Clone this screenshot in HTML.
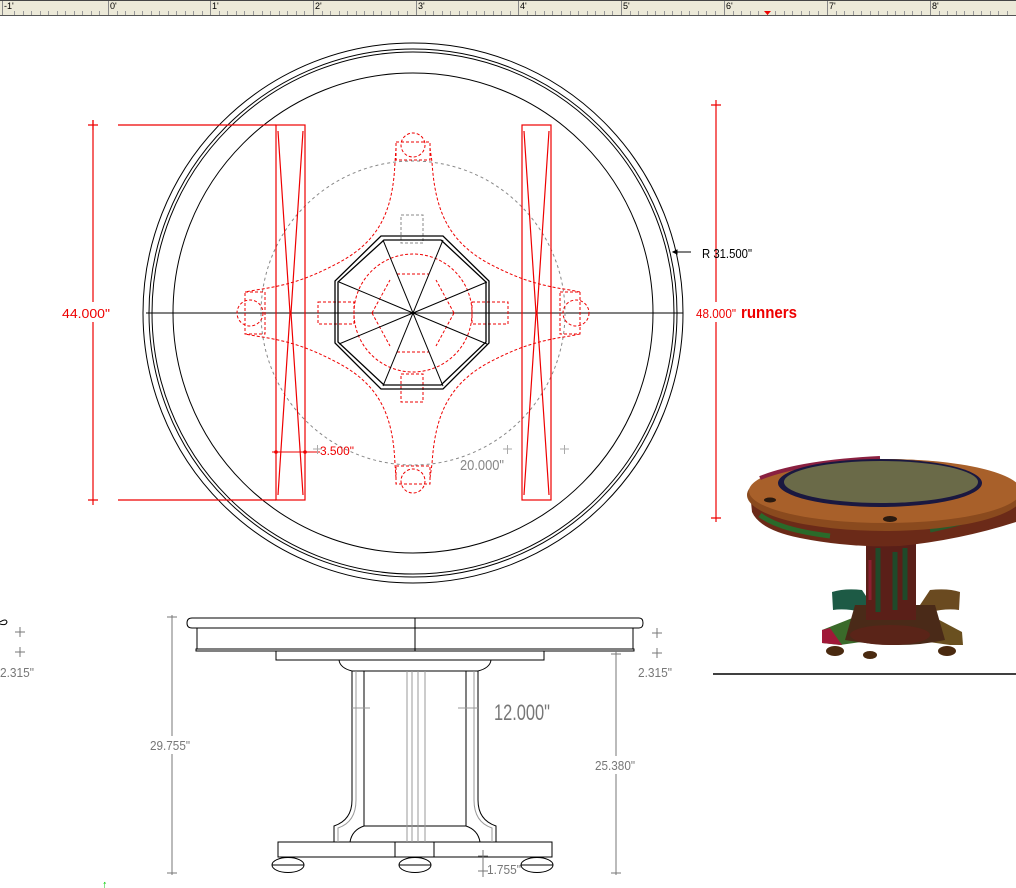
<!DOCTYPE html>
<html><head><meta charset="utf-8"><style>
html,body{margin:0;padding:0;background:#fff;width:1016px;height:888px;overflow:hidden}
svg{display:block}
text{font-family:"Liberation Sans",sans-serif}
</style></head><body>
<svg width="1016" height="888" viewBox="0 0 1016 888" xmlns="http://www.w3.org/2000/svg">
<!-- ruler -->
<rect x="0" y="0" width="1016" height="16" fill="#ece9d8"/>
<line x1="0" y1="0.5" x2="1016" y2="0.5" stroke="#444"/>
<line x1="0" y1="15.5" x2="1016" y2="15.5" stroke="#555"/>
<g stroke="#888" stroke-width="1">
<path d="M2.5 1V15 M108.5 1V15 M210.5 1V15 M313.5 1V15 M416.5 1V15 M518.5 1V15 M621.5 1V15 M724.5 1V15 M827.5 1V15 M930.5 1V15"/>
</g>
<g stroke="#999" stroke-width="1">
<path d="M14.5 11V15M23.5 11V15M31.5 11V15M40.5 11V15M48.5 11V15M57.5 11V15M65.5 11V15M74.5 11V15M82.5 11V15M91.5 11V15M99.5 11V15
M117.5 11V15M125.5 11V15M134.5 11V15M142.5 11V15M151.5 11V15M159.5 11V15M168.5 11V15M176.5 11V15M185.5 11V15M193.5 11V15M202.5 11V15
M219.5 11V15M227.5 11V15M236.5 11V15M244.5 11V15M253.5 11V15M262.5 11V15M270.5 11V15M279.5 11V15M287.5 11V15M296.5 11V15M304.5 11V15
M322.5 11V15M330.5 11V15M339.5 11V15M347.5 11V15M356.5 11V15M364.5 11V15M373.5 11V15M381.5 11V15M390.5 11V15M398.5 11V15M407.5 11V15
M425.5 11V15M433.5 11V15M442.5 11V15M450.5 11V15M459.5 11V15M467.5 11V15M476.5 11V15M484.5 11V15M493.5 11V15M501.5 11V15M510.5 11V15
M527.5 11V15M535.5 11V15M544.5 11V15M552.5 11V15M561.5 11V15M570.5 11V15M578.5 11V15M587.5 11V15M595.5 11V15M604.5 11V15M612.5 11V15
M630.5 11V15M638.5 11V15M647.5 11V15M655.5 11V15M664.5 11V15M672.5 11V15M681.5 11V15M689.5 11V15M698.5 11V15M706.5 11V15M715.5 11V15
M733.5 11V15M741.5 11V15M750.5 11V15M758.5 11V15M767.5 11V15M775.5 11V15M784.5 11V15M792.5 11V15M801.5 11V15M809.5 11V15M818.5 11V15
M836.5 11V15M844.5 11V15M853.5 11V15M861.5 11V15M870.5 11V15M878.5 11V15M887.5 11V15M895.5 11V15M904.5 11V15M912.5 11V15M921.5 11V15
M939.5 11V15M947.5 11V15M956.5 11V15M964.5 11V15M973.5 11V15M981.5 11V15M990.5 11V15M998.5 11V15M1007.5 11V15"/>
</g>
<g font-size="9" fill="#000">
<text x="4" y="9">-1'</text><text x="110" y="9">0'</text><text x="212" y="9">1'</text><text x="315" y="9">2'</text><text x="418" y="9">3'</text><text x="520" y="9">4'</text><text x="623" y="9">5'</text><text x="726" y="9">6'</text><text x="829" y="9">7'</text><text x="932" y="9">8'</text>
</g>
<path d="M764 11H771L767.5 15Z" fill="#e00"/>

<!-- top view circles -->
<g fill="none" stroke="#000" stroke-width="1">
<circle cx="413" cy="313" r="270"/>
<circle cx="413" cy="313" r="264"/>
<circle cx="413" cy="313" r="261"/>
<circle cx="413" cy="313" r="240"/>
<line x1="146" y1="313" x2="683" y2="313"/>
</g>
<circle cx="413" cy="313" r="152" fill="none" stroke="#888" stroke-dasharray="3,3"/>

<!-- red dashed base shape -->
<g fill="none" stroke="#e00" stroke-width="1" stroke-dasharray="3,2">
<path d="M396 148 L395 162 C393 210 380 240 340 262 C310 278 290 285 256 290 L245 292 M430 148 L432 162 C435 210 448 240 486 262 C516 278 536 285 570 290 L580 292
M396 478 L395 464 C393 416 380 386 340 364 C310 348 290 341 256 336 L245 334 M430 478 L432 464 C435 416 448 386 486 364 C516 348 536 341 570 336 L580 334"/>
<rect x="396" y="142" width="34" height="18"/><circle cx="413" cy="145" r="12"/>
<rect x="396" y="466" width="34" height="18"/><circle cx="413" cy="481" r="12"/>
<rect x="245" y="292" width="20" height="42"/><circle cx="250" cy="313" r="13"/>
<rect x="560" y="292" width="20" height="42"/><circle cx="576" cy="313" r="13"/>
<circle cx="413" cy="313" r="59"/>
<path d="M397 274H429 M397 352H429 M372 313L390 280M372 313L390 346M454 313L436 280M454 313L436 346"/>
<rect x="318" y="302" width="36" height="22"/><rect x="472" y="302" width="36" height="22"/>
<rect x="401" y="374" width="22" height="28"/>
</g>
<g fill="none" stroke="#888" stroke-dasharray="3,2"><rect x="401" y="215" width="22" height="28"/></g>

<!-- octagon -->
<g fill="none" stroke="#000" stroke-width="1.3">
<path d="M381 236H443L489 281V343L443 389H381L335 343V281Z"/>
<path d="M384 240H441L486 282V342L441 385H384L338 342V282Z"/>
</g>
<g stroke="#000" stroke-width="1">
<path d="M383 240L443 386M443 240L383 386M339 282L487 344M339 344L487 282"/>
</g>

<!-- runners -->
<g fill="none" stroke="#e00" stroke-width="1.2">
<rect x="276" y="125" width="29" height="375"/>
<rect x="522" y="125" width="29" height="375"/>
<path d="M278 131L290 313L278 495 M303 131L291 313L303 495 M524 131L536 313L524 495 M549 131L537 313L549 495"/>
<path d="M118 125H276 M118 500H276 M93 120V505 M716 100V522"/>
<path d="M88 125H98M93 120V130M88 500H98 M711 105H721M711 518H721"/>
</g>
<rect x="60" y="302" width="58" height="20" fill="#fff"/>
<text x="62" y="318" font-size="13" fill="#e00" textLength="48" lengthAdjust="spacingAndGlyphs">44.000"</text>
<rect x="694" y="302" width="44" height="20" fill="#fff"/>
<text x="696" y="318" font-size="13" fill="#e00" textLength="40" lengthAdjust="spacingAndGlyphs">48.000"</text>
<text x="741" y="318" font-size="17" font-weight="bold" fill="#e00" textLength="56" lengthAdjust="spacingAndGlyphs">runners</text>
<path d="M676 252H691M673 252l4 -2v4z" stroke="#000" fill="#000"/>
<text x="702" y="258" font-size="13" fill="#000" textLength="50" lengthAdjust="spacingAndGlyphs">R 31.500"</text>
<g stroke="#e00"><path d="M272 452H320"/></g>
<circle cx="276" cy="452" r="1.8" fill="#e00"/><circle cx="305" cy="452" r="1.8" fill="#e00"/>
<text x="320" y="455" font-size="12" fill="#e00" textLength="34" lengthAdjust="spacingAndGlyphs">3.500"</text>
<text x="460" y="470" font-size="15" fill="#888" textLength="44" lengthAdjust="spacingAndGlyphs">20.000"</text>
<g stroke="#aaa"><path d="M503 449H512M507.5 445V454M560 449H569M564.5 445V454M313 449H322M317.5 445V454"/></g>

<!-- side view -->
<g fill="none" stroke="#000" stroke-width="1">
<path d="M192 618H639Q643 618 643 623Q643 628 639 628H192Q187 628 187 623Q187 618 192 618Z"/>
<path d="M197 628V649H633V628"/>
<path d="M196 649H634V651H196Z"/>
<line x1="415" y1="618" x2="415" y2="651"/>
<rect x="276" y="651" width="268" height="9"/>
<path d="M339 660Q340 668 352 671H478Q490 668 491 660"/>
<path d="M352 671V800Q352 820 334 826V842 M478 671V800Q478 820 496 826V842"/>
<path d="M364 671V826H466V671"/>
<path d="M350 842Q352 830 364 826 M480 842Q478 830 466 826"/>
<rect x="278" y="842" width="274" height="15"/>
<path d="M395 842V857M434 842V857"/>
<ellipse cx="288" cy="865" rx="16" ry="7.5"/>
<ellipse cx="415" cy="865" rx="16" ry="7.5"/>
<ellipse cx="537" cy="865" rx="16" ry="7.5"/>
<path d="M272 865H304M399 865H431M521 865H553"/>
</g>
<g fill="none" stroke="#999" stroke-width="1">
<path d="M356 671V800Q356 822 338 828V842 M474 671V800Q474 822 492 828V842"/>
<path d="M407 671V842M412 671V842M418 671V842M425 671V842"/>
<path d="M352 708H370M458 708H478"/>
</g>
<g stroke="#777" stroke-width="1" fill="none">
<path d="M172 615V875M167 617H177M167 873H177"/>
<path d="M616 651V875M611 654H621M611 873H621"/>
<path d="M657 628V638M652 633H662M657 648V658M652 653H662"/>
<path d="M20 627V637M15 632H25M20 647V657M15 652H25"/>
<path d="M483 850V877M478 856H488M478 871H488"/>
</g>
<rect x="148" y="736" width="44" height="18" fill="#fff"/>
<text x="150" y="750" font-size="13" fill="#777" textLength="40" lengthAdjust="spacingAndGlyphs">29.755"</text>
<rect x="593" y="756" width="44" height="18" fill="#fff"/>
<text x="595" y="770" font-size="13" fill="#777" textLength="40" lengthAdjust="spacingAndGlyphs">25.380"</text>
<text x="638" y="677" font-size="13" fill="#777" textLength="34" lengthAdjust="spacingAndGlyphs">2.315"</text>
<text x="0" y="677" font-size="13" fill="#777" textLength="34" lengthAdjust="spacingAndGlyphs">2.315"</text>
<text x="494" y="720" font-size="22" fill="#777" textLength="56" lengthAdjust="spacingAndGlyphs">12.000"</text>
<text x="487" y="874" font-size="13" fill="#777" textLength="34" lengthAdjust="spacingAndGlyphs">1.755"</text>
<path d="M0 622Q6 618 7 622Q6 626 0 624" fill="none" stroke="#000"/>
<text x="102" y="888" font-size="11" fill="#0c0">↑</text>

<!-- photo -->
<line x1="713" y1="674" x2="1016" y2="674" stroke="#000" stroke-width="1.5"/>
<g>
<!-- base legs -->
<path d="M832 592Q845 588 862 590L872 605L862 612Q845 608 833 610Z" fill="#1d5a45"/>
<path d="M960 592Q948 588 930 590L920 605L930 612Q947 608 959 610Z" fill="#6a4a20"/>
<path d="M822 630L860 615L875 640L840 645L822 643Z" fill="#3a6a2a"/>
<path d="M962 632L930 615L915 640L950 645L963 645Z" fill="#6a5020"/>
<path d="M822 630L830 628L842 645L822 643Z" fill="#a01838"/>
<path d="M855 605L935 605L945 640Q900 650 845 640Z" fill="#4a2a18"/>
<ellipse cx="890" cy="635" rx="40" ry="10" fill="#5a2418"/>
<ellipse cx="835" cy="651" rx="9" ry="5" fill="#4a2a10"/>
<ellipse cx="947" cy="651" rx="9" ry="5" fill="#4a2a10"/>
<ellipse cx="870" cy="655" rx="7" ry="4" fill="#4a2a10"/>
<!-- column -->
<rect x="866" y="540" width="50" height="80" fill="#5a1f18"/>
<path d="M878 548V612M895 552V610M905 548V600" stroke="#1f4a2a" stroke-width="5"/>
<path d="M870 560V600" stroke="#8a2030" stroke-width="3"/>
<!-- top -->
<path d="M750 492L752 512Q760 530 800 538Q850 548 900 546Q960 540 1016 522V490Z" fill="#6b2a18"/>
<path d="M760 515Q780 530 830 536" stroke="#2a6a2a" stroke-width="5" fill="none"/>
<path d="M930 530Q970 522 1010 505" stroke="#2a5a2a" stroke-width="5" fill="none"/>
<ellipse cx="885" cy="495" rx="138" ry="36" fill="#8a4a1e"/>
<ellipse cx="885" cy="491" rx="136" ry="32" fill="#a8602a"/>
<path d="M760 478Q800 462 880 458" stroke="#8a2040" stroke-width="4" fill="none"/>
<ellipse cx="880" cy="483" rx="102" ry="24" fill="#1a1840"/>
<ellipse cx="881" cy="482" rx="97" ry="21" fill="#6a6a48"/>
<ellipse cx="770" cy="500" rx="6" ry="2.5" fill="#2a1a10"/>
<ellipse cx="890" cy="519" rx="7" ry="3" fill="#2a1a10"/>
</g>
</svg>
</body></html>
